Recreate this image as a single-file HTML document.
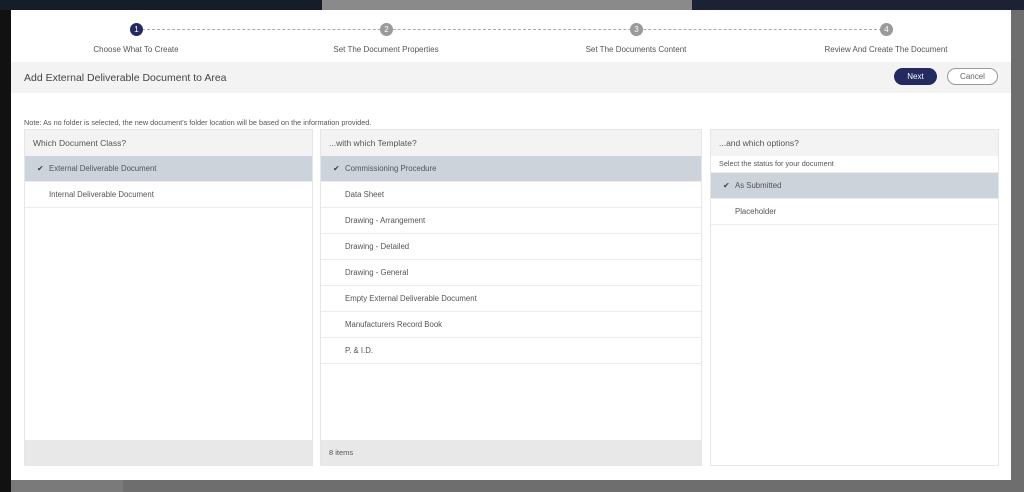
<!DOCTYPE html>
<html><head><meta charset="utf-8"><style>
*{box-sizing:border-box;margin:0;padding:0}
body{width:1024px;height:492px;overflow:hidden;background:#6e6e6e;font-family:"Liberation Sans",sans-serif;position:relative}
.topbar{position:absolute;left:0;top:0;width:1024px;height:10px;background:#1a2233}
.topbar2{position:absolute;left:0;top:0;width:330px;height:10px;background:#161c28}
.leftstrip{position:absolute;left:0;top:10px;width:11px;height:482px;background:#111}
.bottomstrip{position:absolute;left:11px;top:480px;width:112px;height:12px;background:#7a7a7a}
.toast{position:absolute;left:322px;top:0;width:370px;height:10px;background:#8a8a8a}
.modal{position:absolute;left:11px;top:10px;width:1000px;height:470px;background:#fff}
.line{position:absolute;top:19px;left:126px;width:750px;border-top:1px dashed #aaa}
.circ{position:absolute;top:13px;width:13px;height:13px;border-radius:50%;background:#9a9a9a;color:#fff;font-size:8px;text-align:center;line-height:13px}
.lbl{position:absolute;top:35px;width:250px;text-align:center;font-size:8px;color:#555}
.titlebar{position:absolute;left:0;top:52px;width:1000px;height:31px;background:#f3f3f3}
.title{position:absolute;left:13px;top:62px;font-size:10.5px;color:#444}
.next{position:absolute;left:883px;top:58px;width:43px;height:17px;border-radius:9px;background:#222a60;color:#fff;font-size:8px;text-align:center;line-height:17px}
.cancel{position:absolute;left:936px;top:58px;width:51px;height:17px;border-radius:9px;border:1px solid #999;color:#666;font-size:8px;text-align:center;line-height:15px;background:#fff}
.note{position:absolute;left:13px;top:108px;font-size:7.3px;color:#555}
.panel{position:absolute;top:119px;height:337px;border:1px solid #e6e6e6;background:#fff}
.ph{height:26px;background:#f3f3f3;font-size:8.5px;color:#555;padding-left:8px;line-height:26px}
.row{height:26px;border-bottom:1px solid #ececec;font-size:7.8px;color:#555;padding-left:24px;line-height:25px;position:relative}
.sel{background:#ccd3da}
.sel:before{content:"\2714";position:absolute;left:12px;font-size:8px;color:#444}
.sub{height:17px;font-size:7.3px;color:#555;padding-left:8px;line-height:16px;border-bottom:1px solid #ececec}
.foot{position:absolute;left:0;bottom:0;width:100%;height:25px;background:#e8e8e8;font-size:7.5px;color:#555;padding-left:8px;line-height:25px}
</style></head><body>
<div class="topbar"></div><div class="topbar2"></div><div class="toast"></div>
<div class="leftstrip"></div><div class="bottomstrip"></div>
<div class="modal">
<div class="line"></div>
<div class="circ" style="left:119px;background:#222a60">1</div>
<div class="circ" style="left:369px">2</div>
<div class="circ" style="left:619px">3</div>
<div class="circ" style="left:869px">4</div>
<div class="lbl" style="left:0px">Choose What To Create</div>
<div class="lbl" style="left:250px">Set The Document Properties</div>
<div class="lbl" style="left:500px">Set The Documents Content</div>
<div class="lbl" style="left:750px">Review And Create The Document</div>
<div class="titlebar"></div>
<div class="title">Add External Deliverable Document to Area</div>
<div class="next">Next</div><div class="cancel">Cancel</div>
<div class="note">Note: As no folder is selected, the new document's folder location will be based on the information provided.</div>
<div class="panel" style="left:13px;width:289px">
<div class="ph">Which Document Class?</div>
<div class="row sel">External Deliverable Document</div>
<div class="row">Internal Deliverable Document</div>
<div class="foot"></div></div>
<div class="panel" style="left:309px;width:382px">
<div class="ph">...with which Template?</div>
<div class="row sel">Commissioning Procedure</div>
<div class="row">Data Sheet</div>
<div class="row">Drawing - Arrangement</div>
<div class="row">Drawing - Detailed</div>
<div class="row">Drawing - General</div>
<div class="row">Empty External Deliverable Document</div>
<div class="row">Manufacturers Record Book</div>
<div class="row">P. &amp; I.D.</div>
<div class="foot">8 items</div></div>
<div class="panel" style="left:699px;width:289px">
<div class="ph">...and which options?</div>
<div class="sub">Select the status for your document</div>
<div class="row sel">As Submitted</div>
<div class="row">Placeholder</div>
</div>
</div>
</body></html>
